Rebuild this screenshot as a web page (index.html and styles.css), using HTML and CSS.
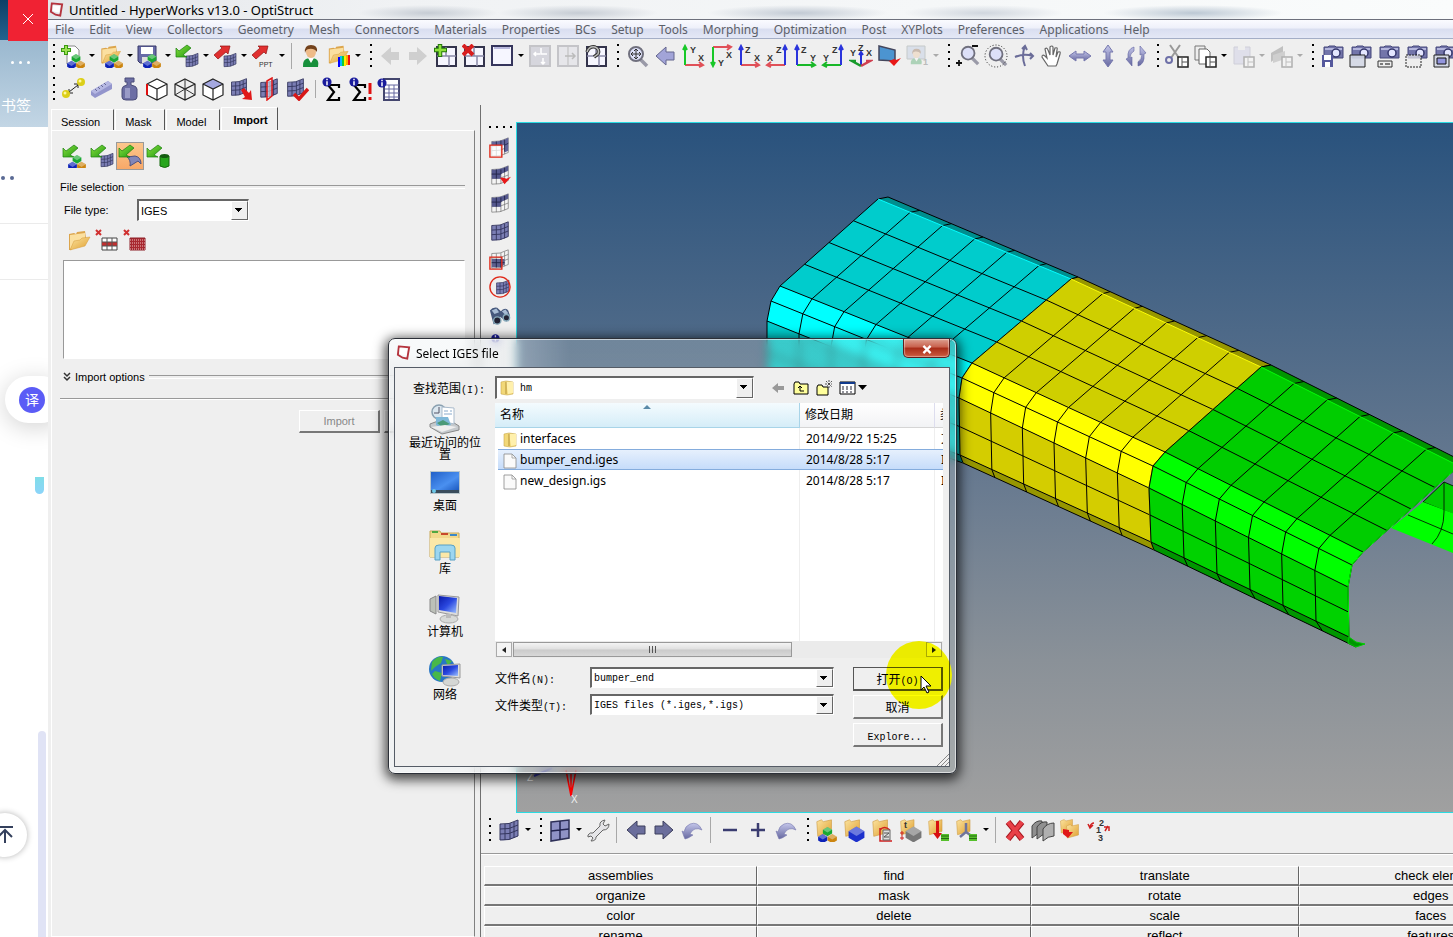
FILE: index.html
```html
<!DOCTYPE html>
<html lang="en">
<head>
    <meta charset="UTF-8">
    <meta name="viewport" content="width=device-width, initial-scale=1.0">
    <title>Untitled - HyperWorks v13.0 - OptiStruct</title>
    <link rel="stylesheet" href="styles.css">
</head>
<body>
    <!-- icon sprite -->
    <svg class="sprite" aria-hidden="true">
        <defs>
            <linearGradient id="gold" x1="0" y1="0" x2="1" y2="1"><stop offset="0" stop-color="#fbe3a0"/><stop offset="1" stop-color="#e0a030"/></linearGradient>
            <linearGradient id="steel" x1="0" y1="0" x2="0" y2="1"><stop offset="0" stop-color="#c4c6ea"/><stop offset="1" stop-color="#6668a0"/></linearGradient>
            <linearGradient id="leaf" x1="0" y1="0" x2="1" y2="1"><stop offset="0" stop-color="#8be040"/><stop offset="1" stop-color="#1f9a10"/></linearGradient>
            <linearGradient id="screen" x1="0" y1="0" x2="1" y2="1"><stop offset="0" stop-color="#0a1aa8"/><stop offset=".5" stop-color="#2a48e0"/><stop offset="1" stop-color="#9cc0ff"/></linearGradient>
            <linearGradient id="desk" x1="0" y1="0" x2="1" y2="1"><stop offset="0" stop-color="#2060c8"/><stop offset=".6" stop-color="#4a90f0"/><stop offset="1" stop-color="#1d5ac0"/></linearGradient>
        </defs>
        <symbol id="folder" viewBox="0 0 24 24"><path d="M2 5l5-1 2 1 1-2 8-1 1 7-15 12-2 0z" fill="#dca54c"/><path d="M3 6l15-2v10L3 20z" fill="#fbe0a0"/><path d="M3 21l4-9 6-1 2-2 8-1-5 9z" fill="url(#gold)" stroke="#d59b38" stroke-width=".5"/></symbol>
        <symbol id="mesh" viewBox="0 0 24 24"><path d="M3 6q9 1 18-4v16q-9 5-18 4z" fill="#7b7eb4"/><path d="M3 6q9 1 18-4v16q-9 5-18 4zM3 11q9 1 18-4M3 16q9 1 18-4M8 6v16M13 5.500v16M17 4v16" fill="none" stroke="#34365e"/></symbol>
        <symbol id="mesh-line" viewBox="0 0 24 24"><path d="M3 6q9 1 18-4v16q-9 5-18 4zM3 11q9 1 18-4M3 16q9 1 18-4M8 6v16M13 5.500v16M17 4v16" fill="#f4f4f4" stroke="#777" stroke-width=".8"/></symbol>
        <symbol id="block" viewBox="0 0 12 12"><path d="M6 1l5 3v4l-5 3-5-3V4z"/><path d="M6 1l5 3-5 3-5-3z" fill="#fff" fill-opacity=".35"/></symbol>
        <symbol id="blocks" viewBox="0 0 24 24"><use href="#block" x="5" y="0" width="14" height="14" fill="#19a832"/><use href="#block" x="-1" y="9" width="14" height="14" fill="#0c22b8"/><use href="#block" x="11" y="9" width="14" height="14" fill="#cc8510"/></symbol>
        <symbol id="in" viewBox="0 0 24 24"><path d="M1 13V4l3 3 8-6 4 3-8 7 4 2z" fill="url(#leaf)" stroke="#18800c" stroke-width=".7"/></symbol>
        <symbol id="out" viewBox="0 0 24 24"><path d="M1 11l8-7-2-2 10 0-2 8-2-2-8 7z" fill="#e03030" stroke="#941010" stroke-width=".7"/></symbol>
        <symbol id="new" viewBox="0 0 24 24"><path d="M6 2h8l4 4v14H6z" fill="#fff" stroke="#888"/><path d="M5 1v10M0 6h10" stroke="#3a9a10" stroke-width="4"/><path d="M5 2v8M1 6h8" stroke="#9be050" stroke-width="2"/><use href="#blocks" x="6" y="9" width="18" height="18"/></symbol>
        <symbol id="open" viewBox="0 0 24 24"><use href="#folder" width="23" height="22"/><use href="#blocks" x="6" y="9" width="18" height="18"/></symbol>
        <symbol id="save" viewBox="0 0 24 24"><path d="M1 2h18v17H3l-2-2z" fill="#686ba8" stroke="#363868"/><path d="M4 3h12v7H4z" fill="#fff"/><path d="M5 13h9v6H5z" fill="#ddd"/><use href="#blocks" x="6" y="9" width="18" height="18"/></symbol>
        <symbol id="imp" viewBox="0 0 24 24"><use href="#mesh" x="9" y="8" width="16" height="16"/><use href="#in" width="24" height="24"/></symbol>
        <symbol id="exp" viewBox="0 0 24 24"><use href="#mesh" x="9" y="8" width="16" height="16"/><use href="#out" width="24" height="24"/></symbol>
        <symbol id="user" viewBox="0 0 24 24"><path d="M4 23q-1-8 6-9h4q7 1 5 9z" fill="#18903c"/><path d="M9 14l3 5 3-5z" fill="#fff"/><ellipse cx="12" cy="8" rx="5" ry="6" fill="#eebb88"/><path d="M6 9q-1-8 6-8t6 7q-3-4-8-3-3 0-4 4z" fill="#73421c"/></symbol>
        <symbol id="contour" viewBox="0 0 24 24"><use href="#folder" width="22" height="22"/><path d="M11 13h2v10h-2z" fill="#00f"/><path d="M13 12h2v10h-2z" fill="#0bf"/><path d="M15 12h2v10h-2z" fill="#1c3"/><path d="M17 12h2v10h-2z" fill="#fe0"/><path d="M19 11h2v10h-2z" fill="#fa0"/><path d="M21 11h2v10h-2z" fill="#e11"/></symbol>
        <symbol id="left" viewBox="0 0 24 24"><path d="M3 12l10-9v5h8v8h-8v5z"/></symbol>
        <symbol id="right" viewBox="0 0 24 24"><path d="M21 12L11 3v5H3v8h8v5z"/></symbol>
        <symbol id="win" viewBox="0 0 24 24"><path d="M2 2h20v19H2z" fill="#f6f6ff" stroke="#35355c" stroke-width="2"/><path d="M4 4h16" stroke="#b8b8dd" stroke-width="2"/></symbol>
        <symbol id="win4" viewBox="0 0 24 24"><path d="M3 3h19v19H3z" fill="#f6f6ff" stroke="#34344c" stroke-width="2"/><path d="M3 12h19M15 12v10M12 3v9" stroke="#8a8aa8" stroke-width="1.500"/></symbol>
        <symbol id="win-add" viewBox="0 0 24 24"><use href="#win4" width="24" height="24"/><path d="M6 0v13M0 6h13" stroke="#257a0a" stroke-width="4.500"/><path d="M6 1v11M1 6h11" stroke="#8de03c" stroke-width="2.500"/></symbol>
        <symbol id="win-del" viewBox="0 0 24 24"><use href="#win4" width="24" height="24"/><path d="M1 1l10 10M11 1L1 11" stroke="#d81e1e" stroke-width="4"/></symbol>
        <symbol id="win-swap" viewBox="0 0 24 24"><path d="M2 2h20v20H2z" fill="#d6d6dd" stroke="#c4c4c8" stroke-width="2"/><path d="M6 10h6M15 14v6M8 8l-2 2 2 2M13 4v6h6M13 18l2 2 2-2" stroke="#fff" fill="none" stroke-width="1.500"/></symbol>
        <symbol id="win-grow" viewBox="0 0 24 24"><path d="M2 2h20v20H2z" fill="#e6e6ea" stroke="#c4c4c8" stroke-width="2"/><path d="M12 3v18" stroke="#bbb"/><path d="M9 12h10M16 9l3 3-3 3" stroke="#bbb" fill="none" stroke-width="1.500"/></symbol>
        <symbol id="win-reset" viewBox="0 0 24 24"><use href="#win4" width="24" height="24"/><path d="M3 8q2-6 8-5 5 2 3 7l-4 3" stroke="#333" stroke-width="3.500" fill="none"/><path d="M3 8q2-6 8-5 5 2 3 7l-4 3" stroke="#bbb" stroke-width="1.500" fill="none"/></symbol>
        <symbol id="lens" viewBox="0 0 24 24"><path d="M15 15l7 7" stroke="#9a9aa8" stroke-width="3.500"/><circle cx="11" cy="10" r="7" fill="#dde0f8" stroke="#70707e" stroke-width="2"/></symbol>
        <symbol id="fit" viewBox="0 0 24 24"><use href="#lens" width="24" height="24"/><path d="M11 5v10M6 10h10M9 7l2-2 2 2M9 13l2 2 2-2M8 8l-2 2 2 2M14 8l2 2-2 2" stroke="#333" fill="none"/></symbol>
        <symbol id="zoompm" viewBox="0 0 24 24"><use href="#lens" x="2" width="22" height="22"/><path d="M16 2h6M0 19h6M3 16v6" stroke="#111" stroke-width="1.800"/></symbol>
        <symbol id="zoomdot" viewBox="0 0 24 24"><use href="#lens" x="2" y="1" width="22" height="22"/><circle cx="12" cy="12" r="11" fill="none" stroke="#222" stroke-dasharray="1 2"/></symbol>
        <symbol id="rot" viewBox="0 0 24 24"><path d="M13 2q-4 10 0 20M3 13q9-4 18-1M10 5l3-3 2 4M18 9l3 3-3 3" fill="none" stroke="#6a6c98" stroke-width="2"/></symbol>
        <symbol id="hand" viewBox="0 0 24 24"><path d="M8 22l-6-9q0-3 3-1l2 2-2-9q2-2 3 1l2 5V3q2-2 3 0v8l2-7q3-1 2 2l-1 7 2-5q3-1 2 2l-3 10-1 2z" fill="#fff" stroke="#666" stroke-width="1.200"/></symbol>
        <symbol id="horiz" viewBox="0 0 24 24"><path d="M1 12l7-5v3h8V7l7 5-7 5v-3H8v3z" fill="url(#steel)" stroke="#7779ae"/></symbol>
        <symbol id="vert" viewBox="0 0 24 24"><path d="M12 1l5 7h-3v8h3l-5 7-5-7h3V8H7z" fill="url(#steel)" stroke="#7779ae"/></symbol>
        <symbol id="spin" viewBox="0 0 24 24"><path d="M10 3Q3 5 4 14l-2 1 6 7V13l-2 1q0-5 4-7zM14 22q7-2 6-12l2-1-6-7v9l2-1q0 5-4 8z" fill="url(#steel)" stroke="#6062a0" stroke-width=".6"/></symbol>
        <symbol id="ax-ru" viewBox="0 0 24 24"><path d="M4 21h17M18 18l4 3-4 2" stroke="var(--h)" stroke-width="2" fill="none"/><path d="M4 21V3M2 6l2-4 2 4" stroke="var(--v)" stroke-width="2" fill="none"/></symbol>
        <symbol id="ax-lu" viewBox="0 0 24 24"><path d="M20 21H3M6 18l-4 3 4 2" stroke="var(--h)" stroke-width="2" fill="none"/><path d="M20 21V3M18 6l2-4 2 4" stroke="var(--v)" stroke-width="2" fill="none"/></symbol>
        <symbol id="ax-rd" viewBox="0 0 24 24"><path d="M4 3h17M18 1l4 2-4 3" stroke="var(--h)" stroke-width="2" fill="none"/><path d="M4 3v18M2 18l2 4 2-4" stroke="var(--v)" stroke-width="2" fill="none"/></symbol>
        <symbol id="iso" viewBox="0 0 24 24"><path d="M12 22V8M10 11l2-3 2 3" stroke="#2430d8" stroke-width="2" fill="none"/><path d="M12 22l-9-5h4" stroke="#179a2a" stroke-width="2.500" fill="none"/><path d="M12 22l9-5h-4" stroke="#d04050" stroke-width="2.500" fill="none"/></symbol>
        <symbol id="view" viewBox="0 0 24 24"><path d="M2 2l16 4v11L2 16z" fill="#4c94d0" stroke="#44465c" stroke-width="1.500"/><path d="M12 17l5 5 7-8-5 2-2-1z" fill="#e81818"/></symbol>
        <symbol id="userview" viewBox="0 0 24 24"><g opacity=".3"><path d="M2 2h18v13H2z" fill="#abd" stroke="#677"/><use href="#user" x="3" y="4" width="17" height="17"/></g></symbol>
        <symbol id="cut" viewBox="0 0 24 24"><path d="M5 1l9 13M15 1L6 14" stroke="#999" stroke-width="2"/><circle cx="4" cy="16" r="3" fill="none" stroke="#6e70a8" stroke-width="2"/><use href="#pane" x="12" y="12" width="12" height="12"/></symbol>
        <symbol id="pane" viewBox="0 0 12 12"><path d="M1 1h10v10H1z" fill="#fff" stroke="#222" stroke-width="1.500"/><path d="M5 2v8M5 6h5" stroke="#555"/></symbol>
        <symbol id="copy" viewBox="0 0 24 24"><path d="M2 2h10v14H2z" fill="#eee" stroke="#777"/><path d="M6 5h8l3 3v12H6z" fill="#fff" stroke="#666"/><use href="#pane" x="12" y="12" width="12" height="12"/></symbol>
        <symbol id="paste" viewBox="0 0 24 24"><g opacity=".3"><path d="M3 3h16v17H3z" fill="#bcbce0" stroke="#8888a8"/><path d="M7 1h7v5H7z" fill="#eee"/><use href="#pane" x="12" y="12" width="12" height="12"/></g></symbol>
        <symbol id="stack" viewBox="0 0 24 24"><g opacity=".3"><path d="M2 9l12-7v7L2 18z" fill="#555"/><path d="M4 11l12-4v8L4 19z" fill="#888"/><use href="#pane" x="12" y="12" width="12" height="12"/></g></symbol>
        <symbol id="camera" viewBox="0 0 24 24"><path d="M4 3h4l1-1h6l1 1h7v11H4z" fill="#7375aa" stroke="#45477a"/><path d="M5 4h17v2H5z" fill="#b4b6dd"/><circle cx="16" cy="9" r="4" fill="#e4e6ff" stroke="#34366c" stroke-width="1.500"/></symbol>
        <symbol id="cam1" viewBox="0 0 24 24"><use href="#camera" width="24" height="24"/><path d="M2 11h11v12H2z" fill="#55589c"/><path d="M4 11h7v5H4zM5 18h5v5H5z" fill="#fff"/></symbol>
        <symbol id="cam2" viewBox="0 0 24 24"><use href="#camera" width="24" height="24"/><path d="M2 11h15v12H2z" fill="#d3d7e4" fill-opacity=".9" stroke="#222"/></symbol>
        <symbol id="cam3" viewBox="0 0 24 24"><use href="#camera" width="24" height="24"/><path d="M2 17h14v6H2z" fill="#eee" stroke="#333"/><path d="M4 20h3M9 20h5" stroke="#555" stroke-width="1.500"/></symbol>
        <symbol id="cam4" viewBox="0 0 24 24"><use href="#camera" width="24" height="24"/><path d="M2 11h15v12H2z" fill="#eee" fill-opacity=".7" stroke="#222" stroke-dasharray="2 1"/></symbol>
        <symbol id="cam5" viewBox="0 0 24 24"><use href="#camera" width="24" height="24"/><path d="M2 11h15v12H2z" fill="#d3d7e4" stroke="#222"/><path d="M5 14h9v6H5z" fill="#9395dd" stroke="#111"/></symbol>
        <symbol id="dist" viewBox="0 0 24 24"><path d="M8 15l9-7M8 12v4h4M13 7h4v4" stroke="#222" fill="none"/><circle cx="5" cy="17" r="4" fill="#dccf18"/><circle cx="20" cy="5" r="4" fill="#dccf18"/><circle cx="4" cy="16" r="1.500" fill="#fff8a0"/><circle cx="19" cy="4" r="1.500" fill="#fff8a0"/></symbol>
        <symbol id="ruler" viewBox="0 0 24 24"><path d="M2 14L19 4l4 3v5L6 21l-4-3z" fill="#9395cc"/><path d="M2 14L19 4l4 3L6 17z" fill="#b5b7e2"/><path d="M6 12l2 2M9 10l2 2M12 8l2 2M15 6l2 2" stroke="#666893"/></symbol>
        <symbol id="weight" viewBox="0 0 24 24"><path d="M8 1h9v4h-3v3q6 1 6 4v8q0 3-4 3H9q-4 0-4-3v-8q0-3 5-4V5H8z" fill="#6c6ea4" stroke="#4a4c78"/><path d="M8 11h5v10H8z" fill="#b7b9e0" opacity=".6"/></symbol>
        <symbol id="cube" viewBox="0 0 24 24"><path d="M12 2l10 5v11l-10 5-10-5V7zM2 7l10 5 10-5M12 12v11" fill="none" stroke="#222" stroke-width="1.200"/></symbol>
        <symbol id="cube-edge" viewBox="0 0 24 24"><path d="M12 2l10 5v11l-10 5-10-5V7z" fill="#fff"/><use href="#cube" width="24" height="24"/><path d="M2 7v11" stroke="#e01010" stroke-width="2"/></symbol>
        <symbol id="cube-all" viewBox="0 0 24 24"><use href="#cube" width="24" height="24"/><path d="M12 2v10M2 18l10-6 10 6" fill="none" stroke="#333"/></symbol>
        <symbol id="cube-face" viewBox="0 0 24 24"><path d="M12 2l10 5v11l-10 5-10-5V7z" fill="#fff"/><path d="M12 2l10 5-10 5L2 7z" fill="#a4a8e0"/><use href="#cube" width="24" height="24"/></symbol>
        <symbol id="mesh-go" viewBox="0 0 24 24"><use href="#mesh" width="20" height="20"/><path d="M12 13l3-2 5 5 2-3 1 10-10-1 3-2z" fill="#e01818"/></symbol>
        <symbol id="mesh-cut" viewBox="0 0 24 24"><use href="#mesh" x="1" width="22" height="22"/><path d="M10 4l5-3v18l-5 4z" fill="#fff" fill-opacity=".5" stroke="#e01818" stroke-width="1.500"/></symbol>
        <symbol id="mesh-ok" viewBox="0 0 24 24"><use href="#mesh" width="21" height="21"/><path d="M9 17l5 5 9-10" fill="none" stroke="#d81818" stroke-width="3.500"/></symbol>
        <symbol id="info" viewBox="0 0 12 12"><circle cx="6" cy="6" r="5.500" fill="#1a1c9c"/><path d="M6 5v5M6 2v2" stroke="#fff" stroke-width="1.800"/></symbol>
        <symbol id="sum" viewBox="0 0 24 24"><path d="M18 11V8H7l6 7-6 8h11v-3" fill="none" stroke="#000" stroke-width="2.200"/><use href="#info" x="1" width="10" height="10"/></symbol>
        <symbol id="sumx" viewBox="0 0 24 24"><path d="M16 11V8H5l6 7-6 8h11v-3" fill="none" stroke="#000" stroke-width="2.200"/><use href="#info" width="10" height="10"/><path d="M21 6v11M21 20v3" stroke="#e01010" stroke-width="3"/></symbol>
        <symbol id="calc" viewBox="0 0 24 24"><path d="M7 2h15v21H7z" fill="#fff" stroke="#44466e" stroke-width="2"/><path d="M8 8h14M8 12h14M8 16h14M8 20h14M12 8v14M17 8v14" stroke="#6668a0"/><use href="#info" y="1" width="10" height="10"/></symbol>
        <symbol id="imp-model" viewBox="0 0 24 24"><use href="#in" width="24" height="24"/><use href="#blocks" x="6" y="10" width="18" height="18"/></symbol>
        <symbol id="imp-geom" viewBox="0 0 24 24"><path d="M9 13l8-1q6 1 6 8l-3-3-8 5q1-6-3-9z" fill="#8286b8" stroke="#4e5280"/><use href="#in" width="24" height="24"/></symbol>
        <symbol id="imp-conn" viewBox="0 0 24 24"><use href="#in" width="24" height="24"/><path d="M14 12h9v10q-4 3-9 0z" fill="#27a51c" stroke="#14690c"/><ellipse cx="18.500" cy="12" rx="4.500" ry="2" fill="#145c10"/></symbol>
        <symbol id="clear-row" viewBox="0 0 24 24"><path d="M1 1l5 5M6 1L1 6" stroke="#d03030" stroke-width="2"/><path d="M7 9h15v12H7z" fill="#fff" stroke="#444"/><path d="M7 13h15v4H7z" fill="#c03030"/><path d="M7 13h15M7 17h15M12 9v12M17 9v12" stroke="#555"/></symbol>
        <symbol id="clear-all" viewBox="0 0 24 24"><path d="M1 1l5 5M6 1L1 6" stroke="#d03030" stroke-width="2"/><path d="M7 9h15v12H7z" fill="#a82830" stroke="#8e2028"/><path d="M7 11h15M7 14h15M7 17h15M7 20h15" stroke="#efc0c0" stroke-dasharray="1 1"/></symbol>
        <symbol id="m-box" viewBox="0 0 24 24"><use href="#mesh-line" width="24" height="24"/><path d="M3 6q9 1 18-4v14l-4 2v-8H3z" fill="#62659a"/><path d="M8 6v4M13 5v5M17 4v13M17 10l4-2" stroke="#2a2c50"/><path d="M1 10h13v13H1z" fill="#fff" fill-opacity=".7" stroke="#e02818" stroke-width="1.500"/></symbol>
        <symbol id="m-half" viewBox="0 0 24 24"><use href="#mesh-line" width="24" height="24"/><path d="M3 6q9 1 18-4v5l-8 4v5H3z" fill="#55588e"/><path d="M3 11h10M8 6v10M13 6v5M17 4v5" stroke="#222448" fill="none"/></symbol>
        <symbol id="m-flip" viewBox="0 0 24 24"><use href="#m-half" width="24" height="24"/><path d="M12 15l5 7 7-8-5 2-3-1z" fill="#e81818"/></symbol>
        <symbol id="m-low" viewBox="0 0 24 24"><use href="#mesh-line" width="24" height="24"/><path d="M3 12h14v6l-4 3H3z" fill="#5d608e"/><path d="M3 16h14M8 12v9M13 12v9" stroke="#222448"/><path d="M1 10h13v13H1z" fill="none" stroke="#e02818" stroke-width="1.500"/></symbol>
        <symbol id="m-circ" viewBox="0 0 24 24"><use href="#mesh" x="6" y="3" width="18" height="18"/><circle cx="12" cy="12" r="11" fill="none" stroke="#e02818" stroke-width="1.500"/></symbol>
        <symbol id="binoc" viewBox="0 0 24 24"><path d="M1 7q3-4 8-3l4 4 2-2q4-2 6 1l2 6-4 6-7-5-2 7-5 1z" fill="#46587c"/><path d="M3 7l5-2 3 4-5 2zM14 8l4-2 3 4-3 2z" fill="#a8bcd4"/><circle cx="9" cy="18" r="4" fill="#223" stroke="#8ab" stroke-width="1.500"/><circle cx="19" cy="15" r="3.500" fill="#223" stroke="#8ab" stroke-width="1.500"/></symbol>
        <symbol id="quad" viewBox="0 0 24 24"><path d="M3 4l18-2v18L3 23z" fill="#8f92c6" stroke="#2e3058" stroke-width="1.500"/><path d="M12 3v19M3 13l18-2" stroke="#222450" stroke-width="1.500"/></symbol>
        <symbol id="wrench" viewBox="0 0 24 24"><path d="M2 17q2-3 5-2l7-7q-1-5 5-6l-2 4 2 2 4-2q0 6-6 6l-7 7q0 4-5 4l2-3-2-2-3 1z" fill="#e5e5e8" stroke="#666"/></symbol>
        <symbol id="undo" viewBox="0 0 24 24"><path d="M2 13q2 6 3 8 4-1 8-4l-3-1q4-8 12-4-4-9-12-6-5 2-6 8z" fill="url(#steel)" stroke="#7779ae" stroke-width=".6"/></symbol>
        <symbol id="minus" viewBox="0 0 24 24"><path d="M5 12h14" stroke="#3a3c70" stroke-width="2.500"/></symbol>
        <symbol id="plus" viewBox="0 0 24 24"><path d="M5 12h14M12 5v14" stroke="#3a3c70" stroke-width="2.500"/></symbol>
        <symbol id="fold" viewBox="0 0 24 24"><path d="M2 4l5-2 2 2 9-2v14L3 20z" fill="url(#gold)" stroke="#cf9c44" stroke-width=".7"/></symbol>
        <symbol id="f-comp" viewBox="0 0 24 24"><use href="#fold" width="22" height="22"/><use href="#blocks" x="3" y="8" width="19" height="19"/></symbol>
        <symbol id="f-solid" viewBox="0 0 24 24"><use href="#fold" width="22" height="22"/><use href="#block" x="4" y="7" width="19" height="19" fill="#1c30cc"/></symbol>
        <symbol id="f-plot" viewBox="0 0 24 24"><use href="#fold" width="22" height="22"/><path d="M9 12q4-5 10 0M9 10v13h12" stroke="#d02020" fill="none" stroke-width="1.500"/><path d="M12 12h7v10h-7z" fill="#ddd" stroke="#666"/><path d="M13 15h5l-5 4h5" stroke="#555" fill="none"/></symbol>
        <symbol id="f-thick" viewBox="0 0 24 24"><use href="#fold" width="20" height="20"/><use href="#block" x="5" y="7" width="19" height="19" fill="#777"/><path d="M3 13v9M1 15h4M1 20h4" stroke="#d02020"/></symbol>
        <symbol id="f-load" viewBox="0 0 24 24"><use href="#fold" width="20" height="20"/><path d="M9 3h3v12h3l-4.500 6L6 15h3z" fill="#d81010"/><path d="M14 16h8v7h-8z" fill="#56c02c"/><path d="M14 18h8M14 20.500h8" stroke="#246c10"/></symbol>
        <symbol id="f-sys" viewBox="0 0 24 24"><use href="#fold" width="20" height="20"/><path d="M11 5v9l-6 5M11 14l7 5" stroke="#70749a" stroke-width="2.500" fill="none"/><path d="M14 16h8v7h-8z" fill="#56c02c"/><path d="M14 18h8M14 20.500h8" stroke="#246c10"/></symbol>
        <symbol id="del" viewBox="0 0 24 24"><path d="M5 4l14 17M19 4L5 21" stroke="#a81820" stroke-width="6"/><path d="M5 4l14 17M19 4L5 21" stroke="#e84048" stroke-width="4"/></symbol>
        <symbol id="cards" viewBox="0 0 24 24"><g fill="#909090" stroke="#444"><path d="M1 8q4-6 10-5v12q-5 0-10 5z"/><path d="M6 9q4-6 10-5v12q-5 0-10 5z"/><path d="M12 11q4-6 11-6v13q-6 0-11 5z" fill="#b0b0b0"/></g></symbol>
        <symbol id="f-move" viewBox="0 0 24 24"><use href="#fold" width="18" height="18"/><use href="#fold" x="6" y="5" width="18" height="18"/><path d="M4 11l6 1v2h4l-5 6-5-4z" fill="#e01818"/></symbol>
        <symbol id="renum" viewBox="0 0 24 24"><path d="M7 5q-3 0-4 4M1 6l2 4 3-3M18 13l3-5M17 9h5v4" stroke="#d02020" fill="none" stroke-width="1.500"/></symbol>
        <symbol id="logo" viewBox="0 0 16 16"><path d="M3 1l11 1-2 12-5-1-5-3z" fill="none" stroke="#b5343e" stroke-width="2"/><path d="M4 3l8 1-1 7-4-1-3-1z" fill="#fff"/></symbol>
        <symbol id="yfold" viewBox="0 0 16 16"><path d="M2 2l5-1 7 1v12l-6 1-6-1z" fill="#f2d878" stroke="#c9a94e" stroke-width=".6"/><path d="M7 2l2 12 5-1V2z" fill="#fff0ac"/><path d="M7 2v12" stroke="#b39036"/></symbol>
        <symbol id="page" viewBox="0 0 16 16"><path d="M2 1h8l4 4v10H2z" fill="#fafafa" stroke="#888" stroke-width=".8"/><path d="M10 1v4h4" fill="none" stroke="#999" stroke-width=".8"/></symbol>
        <symbol id="p-recent" viewBox="0 0 32 32"><circle cx="10" cy="9" r="7" fill="#dce7ef" stroke="#8aa0b0" stroke-width="1.500"/><path d="M10 4v6H5" stroke="#556" fill="none"/><path d="M1 21l16-6 13 8v4l-17 4-12-7z" fill="#c5c9cc" stroke="#888"/><path d="M13 4l12 1v16l-12-3z" fill="#fff" stroke="#abc"/><path d="M15 8h4M15 11h8M21 8h2" stroke="#8ac"/><path d="M7 14h12l3 8-9 3-6-3z" fill="#7fb8d8"/><path d="M8 20l6-3 7 4-8 3z" fill="#4a9a78"/><path d="M2 24l14-2 12 2-15 5z" fill="#eee"/></symbol>
        <symbol id="p-desk" viewBox="0 0 32 32"><path d="M1 5h30v23H1z" fill="#b8c6cc"/><path d="M2 6h28v18H2z" fill="url(#desk)"/><path d="M2 24h28v3H2z" fill="#394c5c"/><circle cx="5" cy="25" r="2" fill="#6cc8e8"/></symbol>
        <symbol id="p-lib" viewBox="0 0 32 32"><path d="M1 2h10l1 2h18v24H1z" fill="#f2d98c" stroke="#c8a858"/><path d="M3 2h6v2H3z" fill="#50a840"/><path d="M12 4h7v2h-7z" fill="#c8482c"/><path d="M21 5h7v2h-7z" fill="#3c88c8"/><path d="M1 9h30v19H1z" fill="#fbe8a8"/><path d="M6 31V19q0-3 4-3h12q4 0 4 3v12h-5v-8H11v8z" fill="#9cd6f0" stroke="#58a0c4"/></symbol>
        <symbol id="p-comp" viewBox="0 0 32 32"><path d="M1 7l6-3v18l-6-3z" fill="#bcc0b8" stroke="#888"/><path d="M9 3l21 2-1 19-20-4z" fill="#dcdcdc" stroke="#999"/><path d="M10 4l18 2-1 15-17-3z" fill="url(#screen)"/><ellipse cx="20" cy="27" rx="9" ry="4" fill="#d8dad8" stroke="#aaa"/><path d="M17 22h5v4h-5z" fill="#bbb"/></symbol>
        <symbol id="p-net" viewBox="0 0 32 32"><circle cx="13" cy="14" r="13" fill="#2876c4"/><path d="M3 7q5-6 11-5l-2 6-6 4-4 4zM6 16l7 2-2 8q-6-2-8-7zM16 4l7 2-4 5z" fill="#48b848"/><path d="M13 10l18-1v14l-18-2z" fill="#ddd" stroke="#999"/><path d="M14 11l15-1v11l-15-1z" fill="url(#screen)"/><ellipse cx="22" cy="27" rx="8" ry="4" fill="#d4d6d4" stroke="#aaa"/></symbol>
    </svg>

    <aside class="browser">
        <div class="browser-top"><button class="tab-close" aria-label="Close"><svg viewBox="0 0 12 12"><path d="M1 1l10 10M11 1L1 11"/></svg></button></div>
        <div class="browser-bar"><span class="more"><i></i><i></i><i></i></span><span class="bookmark">书签</span></div>
        <div class="browser-row dots"><i></i><i></i></div>
        <div class="browser-row second"></div>
        <button class="translate" aria-label="译"><span>译</span></button>
        <div class="charge"></div>
        <div class="scroll-track"></div>
        <button class="to-top" aria-label="Back to top"><svg viewBox="0 0 20 20"><path d="M2 2h16M10 18V6M3 12l7-7 7 7"/></svg></button>
    </aside>

    <main class="app">
        <header class="titlebar">
            <svg class="logo"><use href="#logo"/></svg>
            <h1>Untitled - HyperWorks v13.0 - OptiStruct</h1>
        </header>
        <nav class="menubar">
            <a href="#">File</a><a href="#">Edit</a><a href="#">View</a><a href="#">Collectors</a><a href="#">Geometry</a><a href="#">Mesh</a><a href="#">Connectors</a><a href="#">Materials</a><a href="#">Properties</a><a href="#">BCs</a><a href="#">Setup</a><a href="#">Tools</a><a href="#">Morphing</a><a href="#">Optimization</a><a href="#">Post</a><a href="#">XYPlots</a><a href="#">Preferences</a><a href="#">Applications</a><a href="#">Help</a>
        </nav>

        <div class="toolbar">
            <span class="grip"></span>
            <button class="tool" title="New"><svg><use href="#new"/></svg></button><button class="caret" aria-label="More"></button>
            <button class="tool" title="Open"><svg><use href="#open"/></svg></button><button class="caret" aria-label="More"></button>
            <button class="tool" title="Save"><svg><use href="#save"/></svg></button><button class="caret" aria-label="More"></button>
            <button class="tool" title="Import"><svg><use href="#imp"/></svg></button><button class="caret" aria-label="More"></button>
            <button class="tool" title="Export"><svg><use href="#exp"/></svg></button><button class="caret" aria-label="More"></button>
            <button class="tool ppt" title="Publish"><svg><use href="#out"/><text x="8" y="23">PPT</text></svg></button><button class="caret" aria-label="More"></button>
            <span class="sep"></span>
            <button class="tool" title="User profile"><svg><use href="#user"/></svg></button>
            <button class="tool" title="Results"><svg><use href="#contour"/></svg></button><button class="caret" aria-label="More"></button>
            <span class="grip"></span>
            <button class="tool faded" title="Previous page"><svg><use href="#left"/></svg></button>
            <button class="tool faded" title="Next page"><svg><use href="#right"/></svg></button>
            <button class="tool" title="Add page"><svg><use href="#win-add"/></svg></button>
            <button class="tool" title="Delete page"><svg><use href="#win-del"/></svg></button>
            <button class="tool" title="Layout"><svg><use href="#win"/></svg></button><button class="caret" aria-label="More"></button>
            <button class="tool" title="Swap"><svg><use href="#win-swap"/></svg></button>
            <button class="tool" title="Expand"><svg><use href="#win-grow"/></svg></button>
            <button class="tool" title="Reset"><svg><use href="#win-reset"/></svg></button>
            <span class="grip"></span>
            <button class="tool" title="Fit"><svg><use href="#fit"/></svg></button>
            <button class="tool light" title="Previous view"><svg><use href="#left"/></svg></button>
            <button class="tool xy" title="XY top"><svg><use href="#ax-ru"/><text x="9" y="9">Y</text><text x="17" y="17">X</text></svg></button>
            <button class="tool xy" title="XY bottom"><svg><use href="#ax-rd"/><text x="9" y="22">Y</text><text x="17" y="14">X</text></svg></button>
            <button class="tool zx" title="XZ left"><svg><use href="#ax-ru"/><text x="8" y="9">Z</text><text x="17" y="17">X</text></svg></button>
            <button class="tool zx" title="XZ right"><svg><use href="#ax-lu"/><text x="11" y="9">Z</text><text x="2" y="17">X</text></svg></button>
            <button class="tool zy" title="YZ front"><svg><use href="#ax-ru"/><text x="8" y="9">Z</text><text x="17" y="17">Y</text></svg></button>
            <button class="tool zy" title="YZ rear"><svg><use href="#ax-lu"/><text x="11" y="9">Z</text><text x="2" y="17">Y</text></svg></button>
            <button class="tool" title="Isometric"><svg><use href="#iso"/><text x="9" y="7">Z</text><text x="1" y="12">Y</text><text x="17" y="12">X</text></svg></button>
            <button class="tool" title="Reverse view"><svg><use href="#view"/></svg></button>
            <button class="tool pale" title="User view"><svg><use href="#userview"/><text x="18" y="21">1</text></svg></button><button class="caret off" aria-label="More"></button>
            <span class="grip"></span>
            <button class="tool" title="Zoom"><svg><use href="#zoompm"/></svg></button>
            <button class="tool" title="Circle zoom"><svg><use href="#zoomdot"/></svg></button>
            <button class="tool" title="Rotate"><svg><use href="#rot"/></svg></button>
            <button class="tool" title="Pan"><svg><use href="#hand"/></svg></button>
            <button class="tool" title="Horizontal"><svg><use href="#horiz"/></svg></button>
            <button class="tool" title="Vertical"><svg><use href="#vert"/></svg></button>
            <button class="tool" title="Spin"><svg><use href="#spin"/></svg></button>
            <span class="grip"></span>
            <button class="tool" title="Cut"><svg><use href="#cut"/></svg></button>
            <button class="tool" title="Copy"><svg><use href="#copy"/></svg></button><button class="caret" aria-label="More"></button>
            <button class="tool" title="Paste"><svg><use href="#paste"/></svg></button><button class="caret off" aria-label="More"></button>
            <button class="tool" title="Overlay"><svg><use href="#stack"/></svg></button><button class="caret off" aria-label="More"></button>
            <span class="grip"></span>
            <button class="tool" title="Save image"><svg><use href="#cam1"/></svg></button>
            <button class="tool" title="Capture window"><svg><use href="#cam2"/></svg></button>
            <button class="tool" title="Capture panel"><svg><use href="#cam3"/></svg></button>
            <button class="tool" title="Capture area"><svg><use href="#cam4"/></svg></button>
            <button class="tool" title="Capture page"><svg><use href="#cam5"/></svg></button>
        </div>
        <div class="toolbar">
            <span class="grip"></span>
            <button class="tool" title="Distance"><svg><use href="#dist"/></svg></button>
            <button class="tool" title="Length"><svg><use href="#ruler"/></svg></button>
            <button class="tool" title="Mass"><svg><use href="#weight"/></svg></button>
            <button class="tool" title="Edges"><svg><use href="#cube-edge"/></svg></button>
            <button class="tool" title="Features"><svg><use href="#cube-all"/></svg></button>
            <button class="tool" title="Faces"><svg><use href="#cube-face"/></svg></button>
            <button class="tool" title="Normals"><svg><use href="#mesh-go"/></svg></button>
            <button class="tool" title="Penetration"><svg><use href="#mesh-cut"/></svg></button>
            <button class="tool" title="Check elements"><svg><use href="#mesh-ok"/></svg></button>
            <span class="sep narrow"></span>
            <button class="tool" title="Summary"><svg><use href="#sum"/></svg></button>
            <button class="tool" title="Count"><svg><use href="#sumx"/></svg></button>
            <button class="tool" title="Matrix browser"><svg><use href="#calc"/></svg></button>
        </div>

        <div class="workspace">
            <section class="browser-panel">
                <div class="tabs">
                    <button>Session</button><button>Mask</button><button>Model</button><button class="active">Import</button>
                </div>
                <div class="tab-body">
                    <div class="import-kinds">
                        <button class="tool" title="Import model"><svg><use href="#imp-model"/></svg></button>
                        <button class="tool" title="Import solver deck"><svg><use href="#imp"/></svg></button>
                        <button class="tool picked" title="Import geometry"><svg><use href="#imp-geom"/></svg></button>
                        <button class="tool" title="Import connectors"><svg><use href="#imp-conn"/></svg></button>
                    </div>
                    <h2 class="rule">File selection</h2>
                    <div class="type-row">
                        <label for="file-type">File type:</label>
                        <span class="combo"><select id="file-type"><option>IGES</option></select></span>
                    </div>
                    <div class="file-tools">
                        <button class="tool" title="Select files"><svg><use href="#folder"/></svg></button>
                        <button class="tool" title="Remove selected"><svg><use href="#clear-row"/></svg></button>
                        <button class="tool" title="Remove all"><svg><use href="#clear-all"/></svg></button>
                    </div>
                    <textarea class="files" aria-label="Files"></textarea>
                    <h2 class="rule options"><svg viewBox="0 0 8 10"><path d="M1 1l3 3 3-3M1 5l3 3 3-3"/></svg>Import options</h2>
                    <div class="actions"><button class="push" disabled>Import</button><button class="push" disabled>Close</button></div>
                </div>
            </section>

            <section class="stage">
                <div class="view-row">
                    <div class="side-tools">
                        <span class="grip across"></span>
                        <button class="tool" title="Mask"><svg><use href="#m-box"/></svg></button>
                        <button class="tool" title="Reverse"><svg><use href="#m-flip"/></svg></button>
                        <button class="tool" title="Unmask adjacent"><svg><use href="#m-half"/></svg></button>
                        <button class="tool" title="Unmask all"><svg><use href="#mesh"/></svg></button>
                        <button class="tool" title="Unmask shown"><svg><use href="#m-low"/></svg></button>
                        <button class="tool" title="Spherical clipping"><svg><use href="#m-circ"/></svg></button>
                        <button class="tool" title="Find"><svg><use href="#binoc"/></svg></button>
                        <button class="tool" title="Info"><svg viewBox="0 0 24 24"><use href="#info" x="2" y="2" width="10" height="10"/></svg></button>
                    </div>
                    <svg class="viewport" viewBox="517 123 936 690" preserveAspectRatio="xMinYMin slice">
                        <g id="model"></g>
                        <!-- far flange seen through the open end -->
                        <g stroke="#000" stroke-width=".8">
                            <path d="M1444 482l14 6v28l-35-14z" fill="#00cd00"/>
                            <path d="M1423 502l35 13v40l-67-27z" fill="#0f0" stroke="none"/>
                            <path d="M1444 482v30q0 20-12 32M1408 515l45 19" fill="none"/>
                        </g>
                        <path d="M1349 637l7 5 9 2-9 3-8-4z" fill="#009600" stroke="#0c0"/>
                        <path d="M566 770l5 26 5-26M571 773v20" fill="none" stroke="#f00" stroke-width="1.500"/>
                        <path d="M534 776l18-8" stroke="#33a" stroke-width="2"/>
                        <text x="527" y="781" class="axis">Z</text>
                        <text x="571" y="803" class="axis">X</text>
                    </svg>
                </div>
                <div class="toolbar lower">
                    <span class="grip"></span>
                    <button class="tool" title="Shaded"><svg><use href="#mesh"/></svg></button><button class="caret" aria-label="More"></button>
                    <span class="grip"></span>
                    <button class="tool" title="Element view"><svg><use href="#quad"/></svg></button><button class="caret" aria-label="More"></button>
                    <button class="tool" title="Visual options"><svg><use href="#wrench"/></svg></button>
                    <span class="sep"></span>
                    <button class="tool dark" title="Rotate left"><svg><use href="#left"/></svg></button>
                    <button class="tool dark" title="Rotate right"><svg><use href="#right"/></svg></button>
                    <button class="tool" title="Undo rotate"><svg><use href="#undo"/></svg></button>
                    <span class="sep"></span>
                    <button class="tool" title="Zoom out"><svg><use href="#minus"/></svg></button>
                    <button class="tool" title="Zoom in"><svg><use href="#plus"/></svg></button>
                    <button class="tool" title="Undo zoom"><svg><use href="#undo"/></svg></button>
                    <span class="grip"></span>
                    <button class="tool" title="Assemblies"><svg><use href="#f-comp"/></svg></button>
                    <button class="tool" title="Components"><svg><use href="#f-solid"/></svg></button>
                    <button class="tool" title="Materials"><svg><use href="#f-plot"/></svg></button>
                    <button class="tool" title="Properties"><svg><use href="#f-thick"/><text x="5" y="10">t</text></svg></button>
                    <button class="tool" title="Load collectors"><svg><use href="#f-load"/></svg></button>
                    <button class="tool" title="Systems"><svg><use href="#f-sys"/></svg></button><button class="caret" aria-label="More"></button>
                    <span class="sep"></span>
                    <button class="tool" title="Delete"><svg><use href="#del"/></svg></button>
                    <button class="tool" title="Card edit"><svg><use href="#cards"/></svg></button>
                    <button class="tool" title="Organize"><svg><use href="#f-move"/></svg></button>
                    <button class="tool" title="Renumber"><svg><use href="#renum"/><text x="12" y="8">2</text><text x="9" y="15">1</text><text x="11" y="23">3</text></svg></button>
                </div>
                <div class="panels">
                    <button>assemblies</button><button>find</button><button>translate</button><button>check elems</button>
                    <button>organize</button><button>mask</button><button>rotate</button><button>edges</button>
                    <button>color</button><button>delete</button><button>scale</button><button>faces</button>
                    <button>rename</button><span></span><button>reflect</button><button>features</button>
                </div>
            </section>
        </div>
    </main>

    <div class="dialog" role="dialog" aria-labelledby="dialog-title">
        <div class="dialog-head">
            <svg class="logo"><use href="#logo"/></svg>
            <h2 id="dialog-title">Select IGES file</h2>
            <button class="dialog-close" aria-label="Close"><svg viewBox="0 0 12 10"><path d="M2 1l8 8M10 1L2 9"/></svg></button>
        </div>
        <div class="dialog-body">
            <div class="look-row">
                <label for="look-in">查找范围<span class="key">(I):</span></label>
                <span class="combo look"><svg><use href="#yfold"/></svg><select id="look-in"><option>hm</option></select></span>
                <div class="look-tools">
                    <button aria-label="Back"><svg viewBox="0 0 16 16"><path d="M2 8l6-5v3h6v4H8v3z" fill="#999"/></svg></button>
                    <button aria-label="Up one level"><svg viewBox="0 0 16 16"><path d="M1 14V4l1-2h4l1 2h8v10z" fill="#ffff9c" stroke="#000"/><path d="M11 11H7V6M5 8l2-2 2 2" fill="none" stroke="#000"/></svg></button>
                    <button aria-label="New folder"><svg viewBox="0 0 16 16"><path d="M1 15V7l1-2h4l1 2h5v8z" fill="#ffff9c" stroke="#000"/><path d="M13 0v8M9 4h7M10 1l6 6M16 1l-5 5" stroke="#333" stroke-width=".8" stroke-dasharray="2 1"/></svg></button>
                    <button class="wide" aria-label="View menu"><svg viewBox="0 0 28 16"><path d="M1 2h15v12H1z" fill="#fff" stroke="#000"/><path d="M1 3h15" stroke="#113a8c" stroke-width="2"/><path d="M3 7h12M3 9h12M3 12h12" stroke="#223" stroke-dasharray="2 2"/><path d="M19 5h9l-4.500 5z"/></svg></button>
                </div>
            </div>
            <div class="dialog-main">
                <div class="places">
                    <button><svg><use href="#p-recent"/></svg>最近访问的位置</button>
                    <button><svg><use href="#p-desk"/></svg>桌面</button>
                    <button><svg><use href="#p-lib"/></svg>库</button>
                    <button><svg><use href="#p-comp"/></svg>计算机</button>
                    <button><svg><use href="#p-net"/></svg>网络</button>
                </div>
                <div class="dialog-files">
                    <div class="list">
                        <table>
                            <colgroup><col class="c-name"><col class="c-date"><col></colgroup>
                            <thead><tr><th class="sorted">名称</th><th>修改日期</th><th>类型</th></tr></thead>
                            <tbody>
                                <tr><td><svg><use href="#yfold"/></svg>interfaces</td><td>2014/9/22 15:25</td><td>文件夹</td></tr>
                                <tr class="selected"><td><svg><use href="#page"/></svg>bumper_end.iges</td><td>2014/8/28 5:17</td><td>IGES</td></tr>
                                <tr><td><svg><use href="#page"/></svg>new_design.igs</td><td>2014/8/28 5:17</td><td>IGS</td></tr>
                            </tbody>
                        </table>
                    </div>
                    <div class="hscroll"><button aria-label="Scroll left" class="to-left"></button><span class="thumb"><i></i><i></i><i></i></span><button aria-label="Scroll right" class="to-right"></button></div>
                    <div class="form">
                        <div class="fields">
                            <label for="file-name">文件名<span class="key">(N):</span></label>
                            <span class="combo"><input id="file-name" type="text" value="bumper_end"></span>
                            <label for="file-kind">文件类型<span class="key">(T):</span></label>
                            <span class="combo"><select id="file-kind"><option>IGES files (*.iges,*.igs)</option></select></span>
                        </div>
                        <div class="buttons">
                            <button class="push default">打开<span class="key">(O)</span></button>
                            <button class="push">取消</button>
                            <button class="push"><span class="key">Explore...</span></button>
                        </div>
                    </div>
                </div>
            </div>
            <svg class="sizer" viewBox="0 0 12 12"><path d="M0 12L12 0M4 12l8-8M8 12l4-4"/></svg>
        </div>
        <span class="spot"></span>
        <svg class="pointer" viewBox="0 0 12 19"><path d="M1 1v14l3-3 3 6 2-1-3-6h5z"/></svg>
    </div>

    <script src="mesh.js"></script>
</body>
</html>
```
FILE: styles.css
```css
* {
    box-sizing: border-box;
    margin: 0;
    padding: 0;
}

body {
    display: flex;
    height: 100vh;
    overflow: hidden;
    background: #efefef;
    font-family: "Liberation Sans", "Noto Sans CJK SC", sans-serif;
    font-size: 11px;
    color: #000;
}

button, input, select, textarea {
    font: inherit;
    color: inherit;
    border: 0;
    border-radius: 0;
    background: none;
}

.sprite {
    position: absolute;
    width: 0;
    height: 0;
}

/* strip of the browser behind the window */
.browser {
    position: relative;
    flex: none;
    width: 48px;
    background: #fff;
    overflow: hidden;
}

.browser-top {
    height: 40px;
    background: linear-gradient(#0d3f66, #24638f);
}

.tab-close {
    display: block;
    width: 40px;
    height: 41px;
    margin-left: 8px;
    background: #f02233;
    position: relative;
}

.tab-close svg {
    width: 12px;
    height: 12px;
    stroke: #fff;
    margin-top: -2px;
}

.browser-bar {
    height: 87px;
    padding: 21px 0 0;
    background: linear-gradient(#9ab8cf, #c3d6e5);
    color: #fff;
}

.more, .dots {
    display: flex;
    gap: 5px;
}

.more {
    padding-left: 11px;
}

.more i {
    width: 3px;
    height: 3px;
    border-radius: 50%;
    background: #fff;
}

.bookmark {
    display: block;
    padding-left: 1px;
    margin-top: 32px;
    font-size: 15px;
    line-height: 20px;
}

.browser-row {
    height: 97px;
    border-bottom: 1px solid #ebebeb;
}

.browser-row.second {
    height: 56px;
}

.dots {
    padding: 49px 0 0 1px;
}

.dots i {
    width: 4px;
    height: 4px;
    border-radius: 50%;
    background: #5a6a94;
}

.translate {
    position: absolute;
    left: 5px;
    top: 376px;
    width: 60px;
    height: 47px;
    padding-left: 14px;
    border-radius: 24px;
    background: #fff;
    box-shadow: 0 4px 24px rgba(0, 0, 0, .18);
    text-align: left;
}

.translate span {
    display: block;
    width: 26px;
    height: 26px;
    border-radius: 50%;
    background: #5b5cf6;
    color: #fff;
    font-size: 14px;
    line-height: 26px;
    text-align: center;
}

.charge {
    position: absolute;
    left: 35px;
    top: 477px;
    width: 9px;
    height: 17px;
    border-radius: 0 0 5px 5px;
    background: linear-gradient(#80dde8, #8cd4fa);
}

.scroll-track {
    position: absolute;
    left: 38px;
    top: 731px;
    bottom: 0;
    width: 8px;
    border-radius: 4px 4px 0 0;
    background: #e0e3f5;
}

.to-top {
    position: absolute;
    left: -17px;
    top: 813px;
    width: 44px;
    height: 44px;
    border-radius: 50%;
    background: #fff;
    box-shadow: 0 0 6px rgba(0, 0, 0, .3);
}

.to-top svg {
    width: 20px;
    height: 22px;
    margin-top: 2px;
    fill: none;
    stroke: #34405c;
    stroke-width: 2;
}

/* application window */
.app {
    flex: 1;
    min-width: 0;
    display: flex;
    flex-direction: column;
    background: #efefef;
}

.titlebar {
    display: flex;
    align-items: center;
    gap: 5px;
    height: 20px;
    padding-left: 1px;
    border-bottom: 1px solid #6d707c;
    background:
        radial-gradient(ellipse 70px 8px at 380px 13px, #c6ccd4, transparent),
        radial-gradient(ellipse 80px 8px at 530px 13px, #c6ccd4, transparent),
        radial-gradient(ellipse 90px 8px at 750px 13px, #c2cad4, transparent),
        radial-gradient(ellipse 80px 8px at 935px 13px, #d0d6de, transparent),
        radial-gradient(ellipse 90px 8px at 1145px 13px, #bcc8d4, transparent),
        linear-gradient(90deg, #e4e6ea, #f0f2f4 25%, #fafcfc);
}

.logo {
    width: 15px;
    height: 16px;
}

h1, h2 {
    font: 12px "Noto Sans", sans-serif;
}

h1 {
    font-size: 13px;
    line-height: 18px;
}

.menubar {
    display: flex;
    gap: 15px;
    height: 19px;
    padding-left: 7px;
    border-bottom: 1px solid #a4aec6;
    background: linear-gradient(#fafbff, #eef0fa 45%, #d9def0 50%, #e4e8f6);
    overflow: hidden;
}

.menubar a {
    font: 12px/19px "Noto Sans", sans-serif;
    color: #5c6068;
    text-decoration: none;
}

.toolbar {
    display: flex;
    align-items: center;
    height: 33px;
    overflow: hidden;
}

.toolbar > * {
    flex: none;
}

.tool {
    width: 28px;
    height: 28px;
    display: grid;
    place-items: center;
}

.tool svg {
    width: 24px;
    height: 24px;
}

.tool text {
    font-family: "Liberation Sans", sans-serif;
    font-size: 9px;
    font-weight: bold;
    fill: #333;
    stroke: none;
}

.ppt text {
    font-size: 7px;
    font-weight: normal;
}

.pale text { fill: #bbb; }
.faded { fill: #cfcfcf; }
.light { fill: #a2a4d8; stroke: #64668e; }
.dark { fill: #6b6e9c; stroke: #3c3e5c; }
.xy { --h: #e05058; --v: #18c828; }
.zx { --h: #e05058; --v: #2a34dc; }
.zy { --h: #18b828; --v: #2a34dc; }

.grip {
    width: 13px;
    height: 24px;
    background: repeating-linear-gradient(#000 0 2px, transparent 2px 7px) 7px 0 / 2px 24px no-repeat;
}

.toolbar .grip:first-child {
    width: 11px;
    background-position: 5px 0;
}

.sep {
    width: 10px;
    height: 26px;
    background: linear-gradient(#a8a8a8, #a8a8a8) 4px 0 / 1px 26px no-repeat;
}

.sep.narrow {
    width: 8px;
    height: 18px;
}

.caret {
    width: 10px;
    height: 28px;
    display: grid;
    place-items: center;
}

.caret::after {
    content: "";
    border: 3px solid transparent;
    border-top-color: #000;
    border-bottom: 0;
}

.caret.off::after {
    border-top-color: #aaa;
}

.workspace {
    flex: 1;
    min-height: 0;
    display: flex;
}

/* left tab panel */
.browser-panel {
    flex: none;
    width: 433px;
    padding: 2px 5px 0 3px;
    border-right: 1px solid #707070;
    display: flex;
    flex-direction: column;
}

.tabs {
    display: flex;
    align-items: flex-end;
    height: 23px;
    gap: 1px;
}

.tabs button {
    height: 21px;
    padding: 4px 13px 0 9px;
    border-top: 1px solid #fff;
    border-left: 1px solid #fff;
    border-right: 1px solid #555;
}

.tabs .active {
    height: 23px;
    padding: 4px 9px 2px 11px;
    font-weight: bold;
}

.tab-body {
    flex: 1;
    padding: 11px 9px 0 8px;
    border: 1px solid #fff;
    border-right-color: #808080;
}

.import-kinds, .file-tools {
    display: flex;
    height: 28px;
}

.picked {
    border: 1px solid #999;
    background: linear-gradient(#fcc78c, #f8a868);
}

.rule {
    display: flex;
    align-items: center;
    gap: 4px;
    margin-top: 9px;
    font: 11px/16px "Liberation Sans", sans-serif;
}

.rule::after {
    content: "";
    flex: 1;
    height: 2px;
    border-top: 1px solid #999;
    border-bottom: 1px solid #fff;
}

.type-row {
    display: flex;
    align-items: center;
    padding: 4px 0 0 4px;
}

.type-row label {
    width: 73px;
}

.type-row .combo {
    width: 112px;
}

.combo {
    position: relative;
    display: flex;
    align-items: center;
    height: 22px;
    border: 1px solid #fff;
    border-top: 2px solid #666;
    border-left: 2px solid #666;
    background: #fff;
}

.combo select, .combo input {
    flex: 1;
    min-width: 0;
    height: 18px;
    padding: 0 18px 0 2px;
    appearance: none;
    outline: 0;
}

.combo::after {
    content: "";
    position: absolute;
    right: 0;
    top: 0;
    bottom: 0;
    width: 15px;
    border: 1px solid #fff;
    border-right-color: #666;
    border-bottom-color: #666;
    background: linear-gradient(#000, #000) 3px 6px / 7px 1px no-repeat, linear-gradient(#000, #000) 4px 7px / 5px 1px no-repeat, linear-gradient(#000, #000) 5px 8px / 3px 1px no-repeat, linear-gradient(#000, #000) 6px 9px / 1px 1px no-repeat, #efefef;
    pointer-events: none;
}

.file-tools {
    margin: 6px 0 5px 5px;
}

.files {
    display: block;
    width: calc(100% - 3px);
    height: 99px;
    margin-left: 3px;
    border: 1px solid #fff;
    border-top-color: #999;
    border-left-color: #999;
    background: #fff;
    resize: none;
}

.rule.options {
    margin-top: 10px;
    padding-left: 3px;
}

.options svg {
    width: 8px;
    height: 10px;
    fill: none;
    stroke: #333;
    stroke-width: 1.5;
}

.actions {
    display: flex;
    justify-content: flex-end;
    gap: 4px;
    margin-top: 13px;
    padding-top: 11px;
    border-top: 1px solid #999;
    box-shadow: inset 0 1px #fff;
}

.push {
    height: 23px;
    min-width: 81px;
    border: 1px solid #fff;
    border-right: 2px solid #777;
    border-bottom: 2px solid #777;
    background: #efefef;
}

.push:disabled {
    color: #888;
}

/* right side: graphics area and panels */
.stage {
    flex: 1;
    min-width: 0;
    display: flex;
    flex-direction: column;
    padding-top: 17px;
}

.view-row {
    flex: 1;
    min-height: 0;
    display: flex;
}

.side-tools {
    flex: none;
    width: 35px;
    padding-left: 5px;
}

.side-tools .tool svg {
    width: 22px;
    height: 22px;
}

.grip.across {
    display: block;
    width: 28px;
    height: 11px;
    background: repeating-linear-gradient(90deg, #000 0 2px, transparent 2px 7px) 3px 4px / 24px 2px no-repeat;
}

.viewport {
    flex: 1;
    min-width: 0;
    height: 100%;
    border: 1px solid #2adbe2;
    border-right: 0;
    background: linear-gradient(#29527d, #65788f 50%, #8a9198 78%, #a0a0a0);
}

.axis {
    font-size: 10px;
    fill: #eee;
}

.toolbar.lower {
    height: 41px;
    padding: 0 0 7px 3px;
    border-bottom: 1px solid #999;
    box-shadow: 0 1px #fff;
}

.panels {
    display: grid;
    grid-template-columns: 28.2% 28.2% 27.7% 27.2%;
    grid-auto-rows: 20px;
    flex: none;
    height: 71px;
    margin: 12px 0 0 3px;
    overflow: hidden;
}

.panels > * {
    border-top: 1px solid #fff;
    border-left: 1px solid #fff;
    border-right: 1px solid #666;
    border-bottom: 2px solid #777;
    font-size: 13px;
    line-height: 17px;
    text-align: center;
}

/* file dialog */
.dialog {
    position: absolute;
    left: 388px;
    top: 338px;
    width: 569px;
    padding: 0 6px 6px 5px;
    border: 1px solid #2c3038;
    border-radius: 7px;
    background: linear-gradient(90deg, rgba(240, 244, 246, .5) 100px, rgba(190, 200, 200, .3) 180px);
    backdrop-filter: blur(5px);
    box-shadow: inset 0 0 0 1px rgba(255, 255, 255, .6), 0 3px 12px 3px rgba(0, 0, 0, .7);
    font-size: 12px;
    font-family: "Noto Sans CJK SC", sans-serif;
}

.dialog-head {
    display: flex;
    align-items: center;
    height: 28px;
    gap: 5px;
    padding-left: 2px;
}

.dialog-head h2 {
    flex: 1;
}

.dialog-close {
    align-self: flex-start;
    width: 47px;
    height: 19px;
    border: 1px solid #5c2020;
    border-top: 0;
    border-radius: 0 0 5px 5px;
    background: linear-gradient(#dca090, #c8604c 45%, #a82c18 50%, #cc5c40);
    box-shadow: inset 0 0 1px 1px rgba(255, 255, 255, .4);
}

.dialog-close svg {
    width: 12px;
    height: 9px;
    stroke: #fff;
    stroke-width: 2.5;
}

.dialog-body {
    position: relative;
    height: 400px;
    padding: 8px 6px 0 0;
    border: 1px solid #555c66;
    background: #efefef;
}

.key {
    font: 10px "Liberation Mono", monospace;
}

.look-row {
    display: flex;
    align-items: center;
    gap: 10px;
    height: 23px;
}

.look-row label {
    width: 90px;
    text-align: right;
    line-height: 16px;
}

.combo.look {
    width: 259px;
    height: 23px;
    font: 10px "Liberation Mono", monospace;
}

.look svg {
    width: 16px;
    height: 16px;
    margin: 0 3px 0 2px;
}

.look-tools {
    display: flex;
    gap: 7px;
    margin-left: 6px;
}

.look-tools button, .look-tools svg {
    display: block;
    width: 16px;
    height: 16px;
}

.look-tools .wide, .look-tools .wide svg {
    width: 28px;
}

.dialog-main {
    display: flex;
    margin-top: 4px;
}

.places {
    flex: none;
    width: 100px;
    padding: 0 13px;
}

.places button {
    display: flex;
    flex-direction: column;
    align-items: center;
    width: 74px;
    height: 63px;
    line-height: 12px;
}

.places svg {
    flex: none;
    width: 32px;
    height: 32px;
    margin-bottom: 1px;
}

.dialog-files {
    flex: 1;
    min-width: 0;
}

.list {
    height: 238px;
    background: linear-gradient(#eee, #eee) 304px 0 / 1px 100% no-repeat, linear-gradient(#eee, #eee) 439px 0 / 1px 100% no-repeat, #fff;
    overflow: hidden;
}

.list table {
    width: 100%;
    table-layout: fixed;
    border-spacing: 0;
    font: 12px "Noto Sans", "Noto Sans CJK SC", sans-serif;
}

.c-name { width: 305px; }
.c-date { width: 135px; }

.list th {
    position: relative;
    height: 25px;
    padding-left: 5px;
    border-right: 1px solid #dde;
    border-bottom: 1px solid #d5d5d5;
    background: linear-gradient(#fff, #f2f3f5);
    font-weight: normal;
    text-align: left;
    line-height: 16px;
    white-space: nowrap;
    overflow: hidden;
}

.list th:last-child {
    border-right: 0;
}

.list th.sorted {
    border-color: #a8d4e8;
    background: linear-gradient(#f4fbfe, #d5edf8);
}

.sorted::after {
    content: "";
    position: absolute;
    left: 50%;
    top: 2px;
    margin-left: -4px;
    border: 4px solid transparent;
    border-top: 0;
    border-bottom-color: #5a8aa8;
}

.list td {
    height: 21px;
    padding-left: 6px;
    line-height: 19px;
    white-space: nowrap;
    overflow: hidden;
}

.list td:first-child {
    border-left: 3px solid #fff;
    padding-left: 4px;
}

.list td svg {
    width: 16px;
    height: 16px;
    margin-right: 2px;
    vertical-align: middle;
}

.list .selected td {
    background: linear-gradient(#84acdd, #84acdd) 0 0 / 100% 1px no-repeat, linear-gradient(#84acdd, #84acdd) 0 100% / 100% 1px no-repeat, linear-gradient(#e8f1fd, #c4dbfa);
}

.hscroll {
    display: flex;
    height: 17px;
    padding: 1px;
    background: #ebebeb;
}

.hscroll button {
    width: 16px;
    border: 1px solid #aaa;
    background: #f4f4f4;
    display: grid;
    place-items: center;
}

.hscroll button::after {
    content: "";
    border: 3px solid transparent;
}

.hscroll .to-left::after {
    border-right: 4px solid #222;
    border-left: 0;
}

.hscroll .to-right::after {
    border-left: 4px solid #222;
    border-right: 0;
}

.thumb {
    display: flex;
    align-items: center;
    justify-content: center;
    gap: 2px;
    width: 279px;
    margin: 0 auto 0 1px;
    border: 1px solid #999;
    background: linear-gradient(#f4f4f4, #e0e0e0 48%, #cacaca 52%, #d8d8d8);
}

.thumb i {
    width: 1px;
    height: 7px;
    background: #555;
}

.form {
    display: flex;
    justify-content: space-between;
    margin-top: 9px;
}

.fields {
    display: grid;
    grid-template-columns: 95px 244px;
    row-gap: 6px;
    align-content: start;
    align-items: center;
}

.fields label {
    line-height: 16px;
}

.fields .combo {
    height: 21px;
    font: 10px "Liberation Mono", monospace;
}

.buttons {
    display: flex;
    flex-direction: column;
    gap: 4px;
    width: 90px;
}

.buttons .push {
    height: 24px;
    line-height: 16px;
}

.buttons .default {
    border-color: #555;
}

.sizer {
    position: absolute;
    right: 0;
    bottom: 0;
    width: 12px;
    height: 12px;
    stroke: #888;
}

.spot {
    position: absolute;
    left: 497px;
    top: 302px;
    width: 66px;
    height: 68px;
    border-radius: 50%;
    background: #ff0;
    mix-blend-mode: multiply;
}

.pointer {
    position: absolute;
    left: 531px;
    top: 336px;
    width: 12px;
    height: 19px;
    fill: #fff;
    stroke: #000;
}
```
FILE: mesh.js
```js
// Bumper mesh: four cross sections, points listed from the top flange down
const sections = [
    [[888, 197], [878, 199], [780, 286], [771, 301], [767, 321], [767, 385], [770, 394]],
    [[1078, 277], [1071, 279], [972, 363], [962, 378], [959, 398], [960, 455], [963, 463]],
    [[1271, 365], [1261, 367], [1165, 452], [1153, 466], [1149, 488], [1151, 542], [1154, 550]],
    [[1468, 464], [1459, 466], [1363, 552], [1352, 565], [1348, 587], [1349, 637], [1356, 647]]
];
const colors = [
    ['#008e8e', '#00cccc', '#00ffff', '#00cccc'],
    ['#969600', '#cfcf00', '#ffff00', '#d4cd00'],
    ['#009600', '#00cd00', '#00ff00', '#00d200']
];
const shade = [0, 1, 2, 2, 3, 0];
const rows = [1, 4, 1, 1, 2, 1];
const cols = 6;

const mix = (a, b, t) => [a[0] + (b[0] - a[0]) * t, a[1] + (b[1] - a[1]) * t];
const model = document.getElementById('model');

function add(d, fill, stroke) {
    const path = document.createElementNS('http://www.w3.org/2000/svg', 'path');
    path.setAttribute('d', d);
    path.setAttribute('fill', fill);
    path.setAttribute('stroke', stroke);
    model.appendChild(path);
}

for (let p = 0; p < 3; p++) {
    const a = sections[p];
    const b = sections[p + 1];
    let lines = '';
    for (let s = 0; s < rows.length; s++) {
        add('M' + a[s] + 'L' + b[s] + 'L' + b[s + 1] + 'L' + a[s + 1] + 'z', colors[p][shade[s]], 'none');
        for (let r = 0; r < rows[s]; r++) {
            // the flange edge is drawn in the part colour below
            if (s === 1 && r === 0) continue;
            lines += 'M' + mix(a[s], a[s + 1], r / rows[s]) + 'L' + mix(b[s], b[s + 1], r / rows[s]);
        }
    }
    lines += 'M' + a[6] + 'L' + b[6];
    for (let c = 0; c <= cols; c++) {
        lines += 'M' + a.map((pt, i) => mix(pt, b[i], c / cols)).join('L');
    }
    add(lines, 'none', '#000');
    add('M' + a[1] + 'L' + b[1] + 'M' + b.slice(1).join('L'), 'none', colors[p][2]);
}
```
